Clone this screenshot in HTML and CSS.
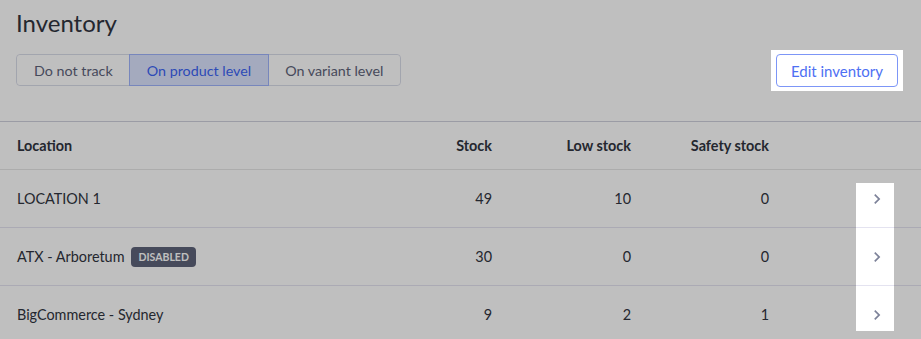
FILE: index.html
```html
<!DOCTYPE html>
<html lang="en">
<head>
  <meta charset="UTF-8" />
  <meta name="viewport" content="width=device-width, initial-scale=1.0"/>
  <title>Inventory</title>
  <link rel="stylesheet" href="styles.css">
</head>
<body>

<section class="panel">
  <h2 class="title">Inventory</h2>

  <div class="controls">
    <div class="segmented">
      <button class="segment">Do not track</button>
      <button class="segment active">On product level</button>
      <button class="segment">On variant level</button>
    </div>
    <button class="edit-btn">Edit inventory</button>
  </div>
</section>

<div class="table">
  <div class="row head">
    <div class="cell name">Location</div>
    <div class="cell num">Stock</div>
    <div class="cell num">Low stock</div>
    <div class="cell num">Safety stock</div>
    <div class="cell"></div>
  </div>

  <div class="row">
    <div class="cell name">LOCATION 1</div>
    <div class="cell num">49</div>
    <div class="cell num">10</div>
    <div class="cell num">0</div>
    <div class="cell action">
      <svg class="chevron" viewBox="0 0 24 24"><path d="M10 6L8.59 7.41 13.17 12l-4.58 4.59L10 18l6-6z"/></svg>
    </div>
  </div>

  <div class="row">
    <div class="cell name">ATX - Arboretum <span class="badge">Disabled</span></div>
    <div class="cell num">30</div>
    <div class="cell num">0</div>
    <div class="cell num">0</div>
    <div class="cell action">
      <svg class="chevron" viewBox="0 0 24 24"><path d="M10 6L8.59 7.41 13.17 12l-4.58 4.59L10 18l6-6z"/></svg>
    </div>
  </div>

  <div class="row">
    <div class="cell name">BigCommerce - Sydney</div>
    <div class="cell num">9</div>
    <div class="cell num">2</div>
    <div class="cell num">1</div>
    <div class="cell action">
      <svg class="chevron" viewBox="0 0 24 24"><path d="M10 6L8.59 7.41 13.17 12l-4.58 4.59L10 18l6-6z"/></svg>
    </div>
  </div>
</div>

<!-- tour backdrop with two spotlight holes -->
<svg class="backdrop" viewBox="0 0 921 339" preserveAspectRatio="none">
  <path fill-rule="evenodd" d="M0 0H921V339H0Z M771 50H903V91H771Z M856 183H894V331H856Z"/>
</svg>

</body>
</html>
```

FILE: styles.css
```css
* { box-sizing: border-box; }

body {
  margin: 0; background: #fff; color: #313440;
  font-family: Lato, 'Noto Sans', sans-serif;
  overflow: hidden;
}

.panel { padding: 7px 23px 0 16px; }

.title {
  margin: 0; font-size: 24px; line-height: 32px;
  font-weight: 400; color: #313440;
}

.controls {
  display: flex; justify-content: space-between; align-items: flex-start;
  margin-top: 15px;
}

.segmented {
  display: flex;
  border: 1px solid #d9dce9; border-radius: 4px;
}

.segment {
  height: 30px; padding: 0 17px;
  font: 14.3px Lato, sans-serif; color: #5e637a;
  background: #fff; border: none; cursor: pointer;
}
.segment:first-child { border-radius: 4px 0 0 4px; }
.segment:last-child { border-radius: 0 4px 4px 0; }

.segment.active {
  background: #dbe3fe; color: #3c64f4;
  box-shadow: 0 0 0 1px #9fb3fb;
  position: relative;
}

.edit-btn {
  width: 122px; height: 33px; padding: 0;
  font: 15px Lato, sans-serif; color: #4e70f3;
  background: #fff; border: 1px solid #7d96f7; border-radius: 4px;
  cursor: pointer;
}

.table { margin-top: 34px; border-top: 1px solid #cfd1dc; }

.row {
  display: grid;
  grid-template-columns: 1fr 139px 139px 138px 136px;
  align-items: center;
  height: 58px; border-bottom: 1px solid #e4e3f0;
  font-size: 14.4px;
}

.row.head { height: 48px; font-weight: 700; border-bottom-color: #e6e6e6; }

.cell { padding-right: 16px; }
.cell.name { padding-left: 17px; display: flex; align-items: center; gap: 7px; }
.cell.num { text-align: right; }
.cell.action { display: flex; justify-content: flex-end; padding-right: 34px; }

.badge {
  display: inline-block; height: 20px; line-height: 20px;
  padding: 0 7px; border-radius: 4px;
  background: #5e637a; color: #fff;
  font-size: 10.5px; font-weight: 700; text-transform: uppercase;
}

.chevron { width: 20px; height: 20px; fill: #7d8299; }

.backdrop {
  position: fixed; top: 0; left: 0;
  width: 921px; height: 339px;
  fill: rgba(0,0,0,0.25);
  pointer-events: none;
}
```
